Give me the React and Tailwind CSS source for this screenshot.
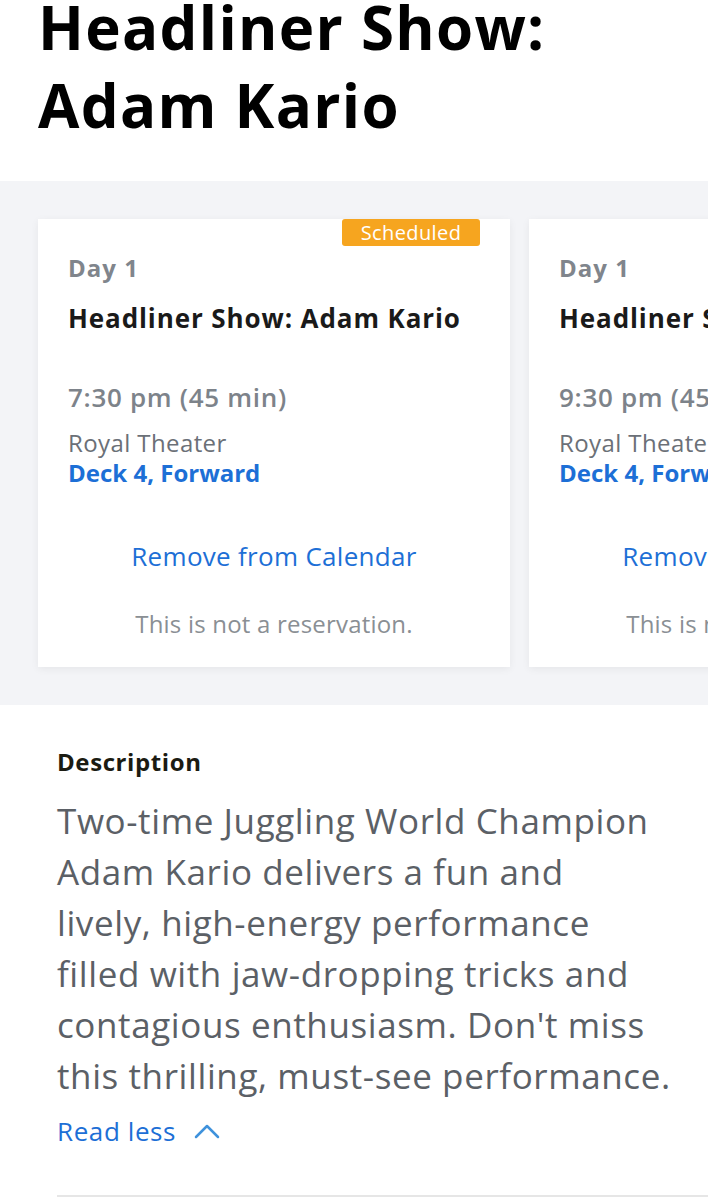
import React from 'react';

const font = { fontFamily: '"Open Sans", Lato, sans-serif' };

function EventCard({ time, scheduled }) {
  return (
    <div className="relative w-[472px] h-[448px] shrink-0 bg-white shadow-[0_2px_8px_rgba(0,0,0,0.06)] px-[30px] pt-[34px]">
      {scheduled && (
        <div className="absolute top-0 right-[30px] w-[138px] h-[27px] bg-[#f6a51f] rounded-[3px] text-white text-[20px] leading-[27px] tracking-[0.4px] text-center">
          Scheduled
        </div>
      )}
      <div className="text-[24px] leading-[30px] font-bold tracking-[1px] text-[#80858c]">Day 1</div>
      <div className="mt-[19px] text-[26px] leading-[32px] font-bold tracking-[0.9px] text-[#1a1a1a] whitespace-nowrap">
        Headliner Show: Adam Kario
      </div>
      <div className="mt-[47px] text-[26px] leading-[32px] font-semibold tracking-[0.7px] text-[#7d838a] whitespace-nowrap">
        {time} (45 min)
      </div>
      <div className="mt-[15px] text-[24px] leading-[30px] tracking-[0.4px] text-[#6b7077] whitespace-nowrap">Royal Theater</div>
      <div className="text-[24px] leading-[30px] font-bold text-[#1d6fd6] whitespace-nowrap">Deck 4, Forward</div>
      <div className="mt-[52px] text-[26px] leading-[32px] tracking-[0.3px] text-[#1d6fd6] text-center whitespace-nowrap">
        Remove from Calendar
      </div>
      <div className="mt-[38px] text-[24px] leading-[28px] tracking-[0.2px] text-[#8a8f94] text-center whitespace-nowrap">
        This is not a reservation.
      </div>
    </div>
  );
}

export default function App() {
  const lines = [
    'Two-time Juggling World Champion',
    'Adam Kario delivers a fun and',
    'lively, high-energy performance',
    'filled with jaw-dropping tricks and',
    "contagious enthusiasm. Don't miss",
    'this thrilling, must-see performance.',
  ];

  return (
    <div className="w-[708px] h-[1200px] overflow-hidden bg-white" style={font}>
      {/* title */}
      <h1 className="-mt-[12px] px-[38px] text-[60px] leading-[78px] font-bold tracking-[1.3px] text-black">
        Headliner Show:
        <br />
        Adam Kario
      </h1>

      {/* cards */}
      <section className="mt-[37px] bg-[#f3f4f7] pt-[38px] pb-[38px] pl-[38px] flex gap-[19px] overflow-hidden">
        <EventCard time="7:30 pm" scheduled />
        <EventCard time="9:30 pm" />
      </section>

      {/* description */}
      <section className="pt-[42px] pl-[57px]">
        <h2 className="text-[24px] leading-[30px] font-bold tracking-[0.6px] text-[#1b1b12]">Description</h2>
        <p className="mt-[18px] text-[35px] leading-[51px] tracking-[0.6px] text-[#5b6066]">
          {lines.map((l) => (
            <span key={l} className="block whitespace-nowrap">{l}</span>
          ))}
        </p>
        <button className="mt-[14px] flex items-center gap-[18px] text-[26px] leading-[32px] tracking-[0.6px] text-[#1d6fd6]">
          Read less
          <svg width="26" height="16" viewBox="0 0 26 16" fill="none">
            <path d="M2 14 L13 3 L24 14" stroke="#3f92dc" strokeWidth="2.5" strokeLinecap="round" strokeLinejoin="round" />
          </svg>
        </button>
        <div className="mt-[48px] h-[2px] bg-[#e6e6e6]" />
      </section>
    </div>
  );
}
